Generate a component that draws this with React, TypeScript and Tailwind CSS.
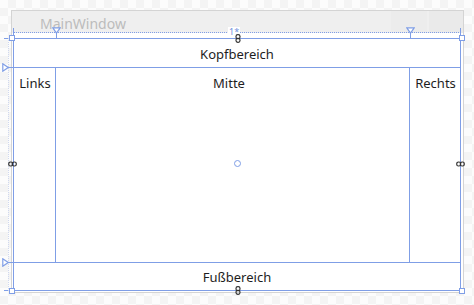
import React from "react";

const line = "border-[#7f9ee6]";

function Chain({ vertical = false }: { vertical?: boolean }) {
  // two small linked loops, as drawn by the designer for pinned margins
  return vertical ? (
    <svg width="6" height="9" viewBox="0 0 6 9" className="block">
      <rect x="1" y="0.7" width="4" height="4" rx="1.8" fill="none" stroke="#333" strokeWidth="1.2" />
      <rect x="1" y="4.3" width="4" height="4" rx="1.8" fill="none" stroke="#333" strokeWidth="1.2" />
    </svg>
  ) : (
    <svg width="9" height="6" viewBox="0 0 9 6" className="block">
      <rect x="0.7" y="1" width="4" height="4" rx="1.8" fill="none" stroke="#333" strokeWidth="1.2" />
      <rect x="4.3" y="1" width="4" height="4" rx="1.8" fill="none" stroke="#333" strokeWidth="1.2" />
    </svg>
  );
}

function TriDown() {
  return (
    <svg width="9" height="7" viewBox="0 0 9 7" className="block">
      <path d="M0.8 0.8 H8.2 L4.5 6.2 Z" fill="white" stroke="#7f9ee6" strokeWidth="1.2" />
    </svg>
  );
}

function TriRight() {
  return (
    <svg width="7" height="9" viewBox="0 0 7 9" className="block">
      <path d="M0.8 0.8 V8.2 L6.2 4.5 Z" fill="white" stroke="#7f9ee6" strokeWidth="1.2" />
    </svg>
  );
}

function Handle() {
  return <div className="w-[6px] h-[6px] border border-[#7f9ee6] bg-white" />;
}

export default function App() {
  const cell = `border-r border-b ${line}`;
  return (
    <div
      className="relative w-[474px] h-[305px] overflow-hidden bg-[repeating-conic-gradient(#f4f4f4_0_25%,#fcfcfc_0_50%)] bg-size-[16px_16px] pl-[11px] pt-[10px]"
      style={{ fontFamily: '"Segoe UI", "Noto Sans", "Open Sans", sans-serif' }}
    >
      {/* the window being designed */}
      <div className="w-[453px] h-[283px] border border-[#d4d4d4] bg-white flex flex-col">
        <div className="h-[22px] bg-[#efefef] flex shrink-0">
          <span className="pl-[28px] pt-[4px] text-[14px] leading-[18px] text-[#bcbcbc]">MainWindow</span>
          <div className="ml-auto flex">
            <div className="w-[36px] bg-[#ececec]" />
            <div className="w-[34px] bg-[#eaeaea] ml-[2px]" />
          </div>
        </div>
        <div
          className={`mt-[5px] ml-[1px] w-[448px] h-[253px] border-l border-t ${line} grid grid-cols-[42px_354px_1fr] grid-rows-[29px_195px_1fr] text-[13px] leading-[19px] text-[#1e1e1e]`}
        >
          <div className={`${cell} col-start-1 row-start-1`} />
          <div className={`${cell} col-start-2 row-start-1`} />
          <div className={`${cell} col-start-3 row-start-1`} />
          <div className={`${cell} col-start-1 row-start-2`} />
          <div className={`${cell} col-start-2 row-start-2`} />
          <div className={`${cell} col-start-3 row-start-2`} />
          <div className={`${cell} col-start-1 row-start-3`} />
          <div className={`${cell} col-start-2 row-start-3`} />
          <div className={`${cell} col-start-3 row-start-3`} />

          <div className={`col-start-1 col-span-3 row-start-1 flex items-center justify-center pt-[2px] bg-white border-b ${line} mr-[1px]`}>
            Kopfbereich
          </div>
          <div className="col-start-1 row-start-2 text-center pt-[6px]">Links</div>
          <div className="col-start-2 row-start-2 text-center pt-[6px] pr-[8px]">Mitte</div>
          <div className="col-start-3 row-start-2 text-center pt-[6px]">Rechts</div>
          <div className={`col-start-1 col-span-3 row-start-3 flex items-center justify-center pt-[1px] bg-white border-b ${line} mr-[1px]`}>
            Fußbereich
          </div>
        </div>
      </div>

      {/* designer adorners: rulers, markers, handles */}
      <div className="absolute left-[13px] top-[32px] w-[448px] border-t border-dotted border-[#7f9ee6]" />
      <div className="absolute left-[13px] top-[28px] h-[10px] border-l border-[#7f9ee6]" />
      <div className="absolute left-[460px] top-[28px] h-[10px] border-l border-[#7f9ee6]" />
      <div className="absolute left-[56px] top-[33px] h-[5px] border-l border-[#7f9ee6]" />
      <div className="absolute left-[410px] top-[33px] h-[5px] border-l border-[#7f9ee6]" />
      <div className="absolute left-[4px] top-[38px] w-[9px] border-t border-[#7f9ee6]" />
      <div className="absolute left-[4px] top-[290px] w-[9px] border-t border-[#7f9ee6]" />
      <div className="absolute left-[8px] top-[38px] h-[253px] border-l border-dotted border-[#cfd8ef]" />
      <div className="absolute left-[4px] top-[67px] w-[9px] border-t border-[#7f9ee6]" />
      <div className="absolute left-[4px] top-[262px] w-[9px] border-t border-[#7f9ee6]" />

      <div className="absolute left-[52px] top-[27px]"><TriDown /></div>
      <div className="absolute left-[406px] top-[27px]"><TriDown /></div>
      <div className="absolute left-[2px] top-[63px]"><TriRight /></div>
      <div className="absolute left-[2px] top-[258px]"><TriRight /></div>

      <div className="absolute left-[9px] top-[35px]"><Handle /></div>
      <div className="absolute left-[459px] top-[35px]"><Handle /></div>
      <div className="absolute left-[9px] top-[288px]"><Handle /></div>
      <div className="absolute left-[459px] top-[288px]"><Handle /></div>

      <div className="absolute left-[228px] top-[27px] px-[1px] bg-white text-[9px] leading-[10px] text-[#6f8fdc]">1*</div>
      <div className="absolute left-[235px] top-[34px]"><Chain vertical /></div>
      <div className="absolute left-[235px] top-[286px]"><Chain vertical /></div>
      <div className="absolute left-[8px] top-[161px]"><Chain /></div>
      <div className="absolute left-[456px] top-[161px]"><Chain /></div>

      <div className="absolute left-[234px] top-[160px] w-[7px] h-[7px] rounded-full border border-[#7f9ee6] bg-white" />
    </div>
  );
}
